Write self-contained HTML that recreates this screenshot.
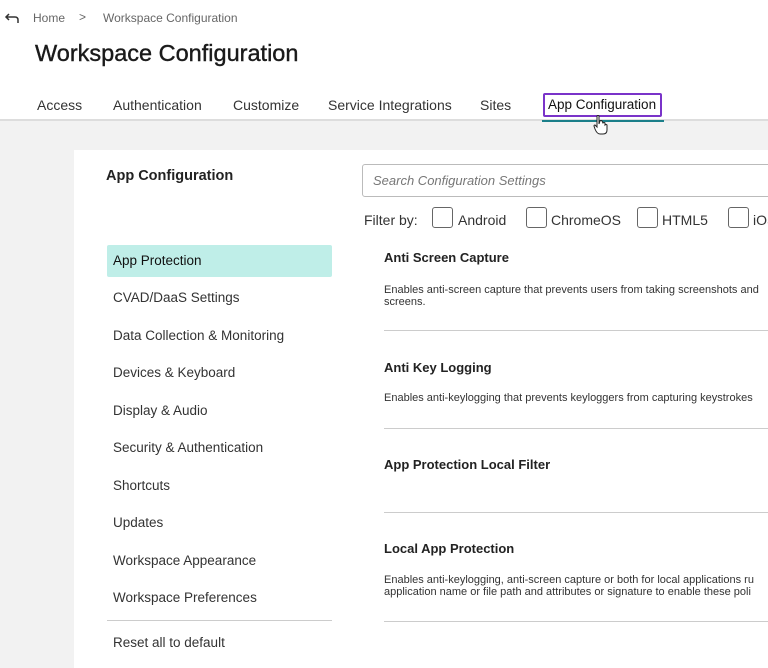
<!DOCTYPE html>
<html><head><style>
*{margin:0;padding:0;box-sizing:border-box}
body{width:768px;height:668px;overflow:hidden;background:#f2f2f2;font-family:"Liberation Sans",sans-serif;color:#222;position:relative}
.a{position:absolute;white-space:nowrap}
#hdr{position:absolute;left:0;top:0;width:768px;height:121px;background:#fff;border-bottom:2px solid #ddd}
#panel{position:absolute;left:74px;top:150px;width:700px;height:518px;background:#fff}
.nav{position:absolute;left:113px;font-size:13.5px;color:#333}
.t{position:absolute;left:384px;font-size:13px;font-weight:bold;color:#222}
.d{position:absolute;left:384px;font-size:11px;line-height:12px;color:#333;white-space:nowrap}
.hr{position:absolute;height:1px;background:#ccc}
.cb{position:absolute;top:207px;width:21px;height:21px;border:1.5px solid #666;border-radius:3px;background:#fff}
.fl{position:absolute;top:212px;font-size:14px;color:#333}
</style></head><body>
<div id="hdr"></div>
<svg class="a" style="left:4px;top:11px" width="16" height="14" viewBox="0 0 16 14"><path d="M5 3 L2 6 L5 9 M2 6 H11 Q14 6 14 9 V12" fill="none" stroke="#333" stroke-width="1.5"/></svg>
<div class="a" style="left:33px;top:11px;font-size:12px;color:#666">Home</div>
<div class="a" style="left:79px;top:10px;font-size:12px;color:#666">&gt;</div>
<div class="a" style="left:103px;top:11px;font-size:12px;color:#666">Workspace Configuration</div>
<div class="a" style="left:35px;top:40px;font-size:23.5px;color:#1a1a1a;-webkit-text-stroke:0.4px #1a1a1a">Workspace Configuration</div>
<div class="a" style="left:37px;top:97px;font-size:14px;color:#333">Access</div>
<div class="a" style="left:113px;top:97px;font-size:14px;color:#333">Authentication</div>
<div class="a" style="left:233px;top:97px;font-size:14px;color:#333">Customize</div>
<div class="a" style="left:328px;top:97px;font-size:14px;color:#333">Service Integrations</div>
<div class="a" style="left:480px;top:97px;font-size:14px;color:#333">Sites</div>
<div class="a" style="left:543px;top:93px;width:119px;height:24px;border:2px solid #7a33c9;border-radius:2px"></div>
<div class="a" style="left:548px;top:97px;font-size:13.5px;color:#111">App Configuration</div>
<div class="a" style="left:542px;top:120px;width:122px;height:2px;background:#1b7f8a"></div>
<svg class="a" style="left:592px;top:114px" width="18" height="22" viewBox="0 0 18 22"><path d="M5 2 Q6 1 7 2 V10 L8 7 Q9 6 10 7 L11 9 Q12 8 13 9 V11 Q14 10 15 11 V16 Q15 20 11 20 H8 Q5 20 3 15 L2 12 Q2 11 3 11 L5 13 Z" fill="#fff" stroke="#222" stroke-width="1"/></svg>
<div id="panel"></div>
<div class="a" style="left:106px;top:168px;font-size:14.5px;font-weight:bold;color:#222">App Configuration</div>
<div class="a" style="left:362px;top:164px;width:420px;height:33px;border:1px solid #bbb;border-radius:3px"></div>
<div class="a" style="left:373px;top:173px;font-size:13px;font-style:italic;color:#777">Search Configuration Settings</div>
<div class="fl" style="left:364px">Filter by:</div>
<div class="cb" style="left:432px"></div><div class="fl" style="left:458px">Android</div>
<div class="cb" style="left:526px"></div><div class="fl" style="left:551px">ChromeOS</div>
<div class="cb" style="left:637px"></div><div class="fl" style="left:662px">HTML5</div>
<div class="cb" style="left:728px"></div><div class="fl" style="left:753px">iOS</div>
<div class="a" style="left:107px;top:245px;width:225px;height:32px;background:#bfeee8;border-radius:2px"></div>
<div class="nav" style="top:253px;color:#111">App Protection</div>
<div class="nav" style="top:290px">CVAD/DaaS Settings</div>
<div class="nav" style="top:328px">Data Collection &amp; Monitoring</div>
<div class="nav" style="top:365px">Devices &amp; Keyboard</div>
<div class="nav" style="top:403px">Display &amp; Audio</div>
<div class="nav" style="top:440px">Security &amp; Authentication</div>
<div class="nav" style="top:478px">Shortcuts</div>
<div class="nav" style="top:515px">Updates</div>
<div class="nav" style="top:553px">Workspace Appearance</div>
<div class="nav" style="top:590px">Workspace Preferences</div>
<div class="hr" style="left:107px;top:620px;width:225px"></div>
<div class="nav" style="top:635px">Reset all to default</div>
<div class="t" style="top:250px">Anti Screen Capture</div>
<div class="d" style="top:284px">Enables anti-screen capture that prevents users from taking screenshots and<br>screens.</div>
<div class="hr" style="left:384px;top:330px;width:384px"></div>
<div class="t" style="top:360px">Anti Key Logging</div>
<div class="d" style="top:392px">Enables anti-keylogging that prevents keyloggers from capturing keystrokes</div>
<div class="hr" style="left:384px;top:428px;width:384px"></div>
<div class="t" style="top:457px">App Protection Local Filter</div>
<div class="hr" style="left:384px;top:512px;width:384px"></div>
<div class="t" style="top:541px">Local App Protection</div>
<div class="d" style="top:574px">Enables anti-keylogging, anti-screen capture or both for local applications ru<br>application name or file path and attributes or signature to enable these poli</div>
<div class="hr" style="left:384px;top:621px;width:384px"></div>
</body></html>
